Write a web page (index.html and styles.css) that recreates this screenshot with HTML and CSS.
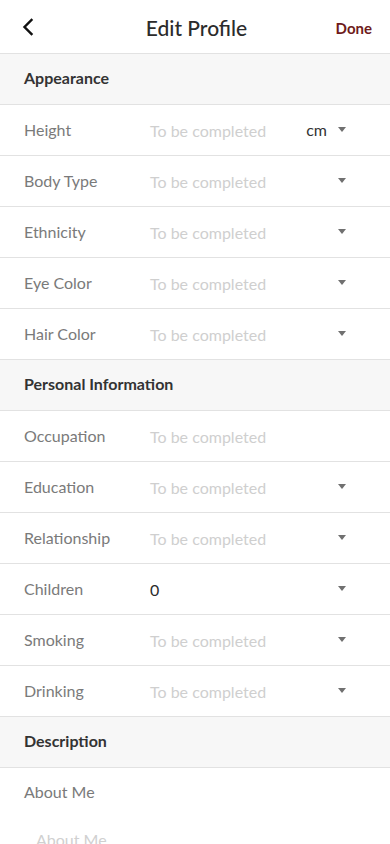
FILE: index.html
```html
<!DOCTYPE html>
<html>
<head>
<meta charset="utf-8">
<link rel="stylesheet" href="styles.css">
</head>
<body>
<div class="page">
  <header class="topbar">
    <button class="back" aria-label="Back">
      <svg width="14" height="18" viewBox="0 0 14 18"><path d="M10.5 2 L3.5 9 L10.5 16" fill="none" stroke="#111" stroke-width="2.4" stroke-linecap="square"/></svg>
    </button>
    <h1 class="title">Edit Profile</h1>
    <span class="done">Done</span>
  </header>

  <div class="section">Appearance</div>
  <div class="row"><span class="label">Height</span><span class="value">To be completed</span><span class="unit">cm</span><span class="caret"></span></div>
  <div class="row"><span class="label">Body Type</span><span class="value">To be completed</span><span class="caret"></span></div>
  <div class="row"><span class="label">Ethnicity</span><span class="value">To be completed</span><span class="caret"></span></div>
  <div class="row"><span class="label">Eye Color</span><span class="value">To be completed</span><span class="caret"></span></div>
  <div class="row"><span class="label">Hair Color</span><span class="value">To be completed</span><span class="caret"></span></div>

  <div class="section">Personal Information</div>
  <div class="row"><span class="label">Occupation</span><span class="value">To be completed</span></div>
  <div class="row"><span class="label">Education</span><span class="value">To be completed</span><span class="caret"></span></div>
  <div class="row"><span class="label">Relationship</span><span class="value">To be completed</span><span class="caret"></span></div>
  <div class="row"><span class="label">Children</span><span class="value filled">0</span><span class="caret"></span></div>
  <div class="row"><span class="label">Smoking</span><span class="value">To be completed</span><span class="caret"></span></div>
  <div class="row"><span class="label">Drinking</span><span class="value">To be completed</span><span class="caret"></span></div>

  <div class="section">Description</div>
  <div class="about">
    <span class="label">About Me</span>
    <div class="textarea">About Me</div>
  </div>
</div>
</body>
</html>
```

FILE: styles.css
```css
* { box-sizing: border-box; }
html, body { margin: 0; padding: 0; background: #fff; }
body {
  font-family: Lato, "Open Sans", "Liberation Sans", sans-serif;
  width: 390px;
  height: 844px;
  overflow: hidden;
}
.page { display: flex; flex-direction: column; }
.topbar {
  height: 54px;
  border-bottom: 1px solid #e2e2e2;
  display: flex;
  align-items: center;
  padding: 0 18px 0 21px;
}
.back {
  border: 0;
  background: none;
  padding: 0;
  width: 40px;
  height: 24px;
  display: flex;
  align-items: center;
  justify-content: flex-start;
}
.title {
  flex: 1;
  margin: 0;
  text-align: center;
  font-size: 21px;
  font-weight: 500;
  color: #2b2b2b;
  padding-top: 2px;
}
.done {
  width: 40px;
  text-align: right;
  font-size: 15px;
  font-weight: 700;
  color: #6e1b1b;
  padding-top: 3px;
}
.section {
  height: 51px;
  background: #f7f7f7;
  border-bottom: 1px solid #e2e2e2;
  display: flex;
  align-items: center;
  padding-left: 24px;
  padding-bottom: 3px;
  font-size: 16px;
  font-weight: 700;
  color: #333;
}
.row {
  height: 51px;
  border-bottom: 1px solid #e2e2e2;
  display: flex;
  align-items: center;
  padding-left: 24px;
  padding-right: 44px;
  padding-bottom: 1px;
  font-size: 16px;
}
.label {
  width: 126px;
  color: #7a7a7a;
  flex-shrink: 0;
}
.value {
  flex: 1;
  color: #cfcfcf;
  padding-top: 1px;
}
.value.filled { color: #2b2b2b; }
.unit {
  color: #333;
  margin-right: 11px;
}
.caret {
  width: 0;
  height: 0;
  border-left: 4px solid transparent;
  border-right: 4px solid transparent;
  border-top: 5px solid #707070;
}
.about {
  padding: 14px 24px 0 24px;
  display: flex;
  flex-direction: column;
  font-size: 16px;
}
.textarea {
  margin-top: 29px;
  padding-left: 12px;
  color: #d0d0d0;
  font-size: 16px;
}
```
